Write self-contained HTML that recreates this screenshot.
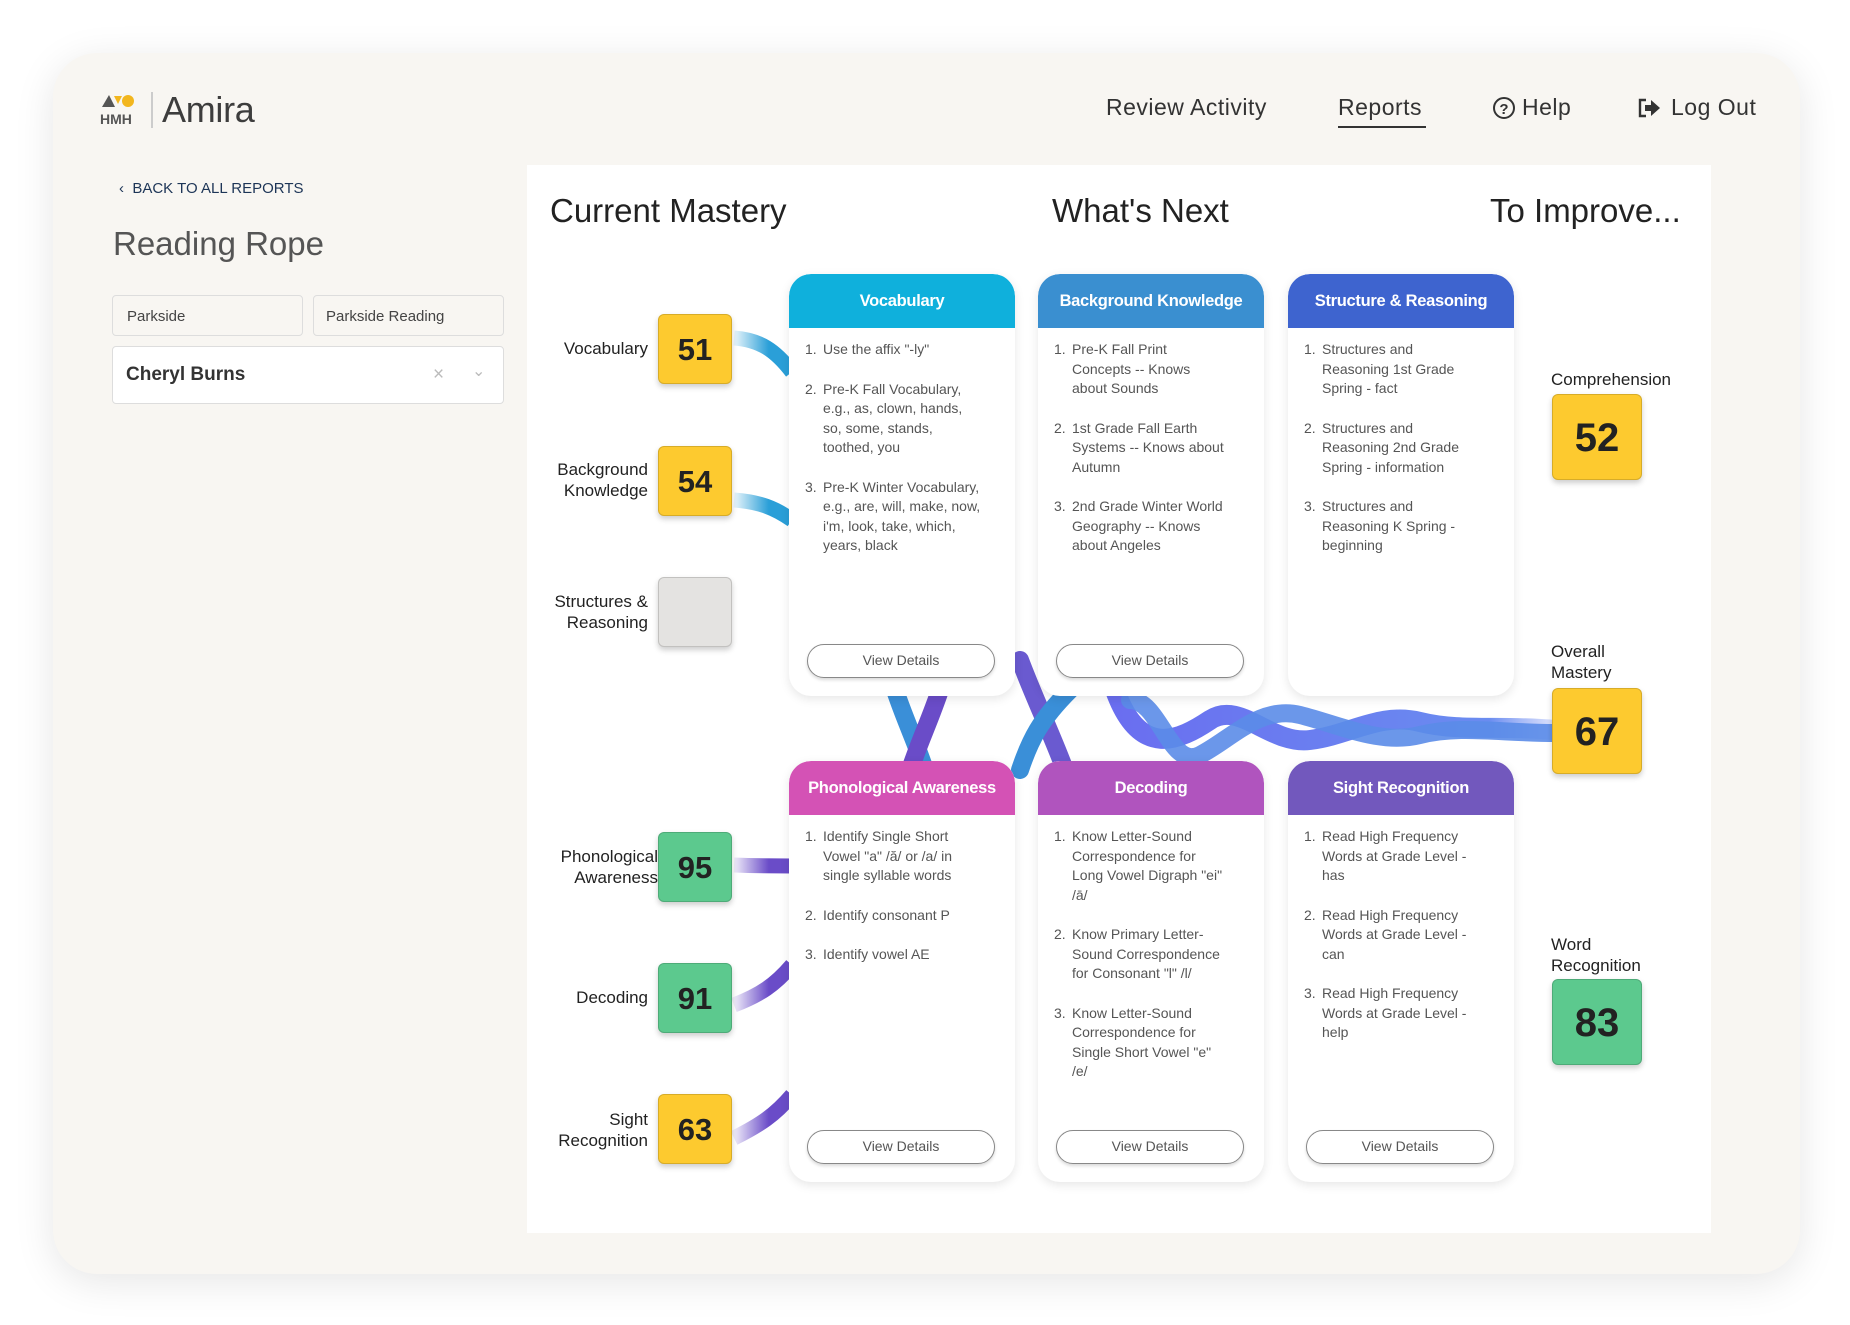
<!DOCTYPE html>
<html><head><meta charset="utf-8"><style>
*{box-sizing:border-box;margin:0;padding:0}
body{width:1850px;height:1325px;background:#fff;font-family:"Liberation Sans",sans-serif;position:relative;overflow:hidden;color:#222}
.abs{position:absolute}
.outer{left:53px;top:53px;width:1747px;height:1221px;background:#f8f6f2;border-radius:44px;box-shadow:0 8px 40px rgba(0,0,0,.10)}
.nav{font-size:23px;color:#333;top:94px;letter-spacing:.5px}
.panel{left:527px;top:165px;width:1184px;height:1068px;background:#fff}
.h{font-size:33px;color:#222;top:192px}
.card{background:#fff;border-radius:22px;box-shadow:0 3px 10px rgba(0,0,0,.10);width:226px;overflow:hidden;z-index:3}
.card .hd{height:54px;color:#fff;font-weight:bold;font-size:16.5px;text-align:center;line-height:54px;border-radius:22px 22px 0 0;letter-spacing:-.3px}
.card ol{list-style:none;padding:12px 10px 0 16px;font-size:14px;color:#555;line-height:19.5px}
.card li{position:relative;padding-left:18px;margin-bottom:20px}
.card li span{position:absolute;left:0}
.btn{position:absolute;left:18px;width:188px;height:34px;border:1.5px solid #888;border-radius:17px;text-align:center;line-height:31px;font-size:14px;color:#555;box-shadow:0 2px 3px rgba(0,0,0,.15);background:#fff}
.sc{width:74px;height:70px;border-radius:6px;font-weight:bold;font-size:31px;color:#222;text-align:center;line-height:70px;box-shadow:0 3px 6px rgba(0,0,0,.2);border:1px solid rgba(0,0,0,.15);z-index:3}
.y{background:#fdca2f}.g{background:#5cc98e}.gr{background:#e4e3e1}
.big{width:90px;height:86px;line-height:86px;font-size:40px}
.lb{font-size:17px;color:#222;text-align:right;line-height:21px;width:120px}
.rl{font-size:17px;color:#222;line-height:21px}
</style></head><body>
<div class="abs outer"></div>
<svg class="abs" style="left:100px;top:92px" width="44" height="34" viewBox="0 0 44 34">
<polygon points="2,15 9,3 15,15" fill="#555"/>
<polygon points="14,4 22,4 18,12" fill="#f2b61e"/>
<circle cx="28" cy="9" r="6" fill="#f2b61e"/>
<text x="0" y="32" font-family="Liberation Sans" font-weight="bold" font-size="14" fill="#555">HMH</text>
</svg>
<div class="abs" style="left:151px;top:92px;width:2px;height:36px;background:#ccc"></div>
<div class="abs" style="left:162px;top:89px;font-size:36px;color:#3d3d3d;letter-spacing:-.3px">Amira</div>
<div class="abs nav" style="left:1106px">Review Activity</div>
<div class="abs nav" style="left:1338px">Reports</div>
<div class="abs" style="left:1338px;top:126px;width:88px;height:2px;background:#333"></div>
<svg class="abs" style="left:1492px;top:96px" width="24" height="24"><circle cx="12" cy="12" r="10" fill="none" stroke="#333" stroke-width="2"/><text x="12" y="18" text-anchor="middle" font-size="15" font-weight="bold" fill="#333" font-family="Liberation Sans">?</text></svg>
<div class="abs nav" style="left:1522px">Help</div>
<svg class="abs" style="left:1637px;top:98px" width="24" height="20"><path d="M9 2H3v16h6" fill="none" stroke="#333" stroke-width="2.4"/><path d="M8 7h6V2l9 8-9 8v-5H8z" fill="#333"/></svg>
<div class="abs nav" style="left:1671px">Log Out</div>

<div class="abs" style="left:119px;top:180px;font-size:15px;color:#1d3557">&#8249;&nbsp; BACK TO ALL REPORTS</div>
<div class="abs" style="left:113px;top:225px;font-size:33px;color:#555;font-weight:300">Reading Rope</div>
<div class="abs" style="left:112px;top:295px;width:191px;height:41px;border:1px solid #ddd;border-radius:4px;font-size:15px;color:#444;padding:12px 14px;background:#f8f6f2">Parkside</div>
<div class="abs" style="left:313px;top:295px;width:191px;height:41px;border:1px solid #ddd;border-radius:4px;font-size:15px;color:#444;padding:12px 12px;background:#f8f6f2">Parkside Reading</div>
<div class="abs" style="left:112px;top:346px;width:392px;height:58px;border:1px solid #ddd;border-radius:4px;background:#fff;font-size:19px;font-weight:bold;color:#333;padding:17px 13px">Cheryl Burns<span style="position:absolute;left:320px;top:17px;color:#bbb;font-weight:normal">×</span><span style="position:absolute;left:359px;top:14px;color:#bbb;font-weight:normal;font-size:16px">&#8964;</span></div>

<div class="abs panel"></div>
<div class="abs h" style="left:550px">Current Mastery</div>
<div class="abs h" style="left:1052px">What's Next</div>
<div class="abs h" style="left:1490px">To Improve...</div>

<svg class="abs" style="left:0;top:0;z-index:2" width="1850" height="1325">
<defs>
<linearGradient id="gb" x1="0" x2="1"><stop offset="0" stop-color="#2a9fd8" stop-opacity=".1"/><stop offset=".6" stop-color="#2a9fd8"/></linearGradient>
<linearGradient id="gp" x1="0" x2="1"><stop offset="0" stop-color="#6a4cc8" stop-opacity=".1"/><stop offset=".6" stop-color="#6a4cc8"/></linearGradient>
<linearGradient id="gr" x1="0" x2="1"><stop offset="0" stop-color="#6a6ef0"/><stop offset=".85" stop-color="#6a8cf0"/><stop offset="1" stop-color="#8aa0f5" stop-opacity=".3"/></linearGradient>
</defs>
<g fill="none" stroke-width="15">
<path d="M734 338 C760 340 775 350 792 372" stroke="url(#gb)"/>
<path d="M734 500 C760 502 775 508 792 520" stroke="url(#gb)"/>
<path d="M734 617 C760 617 775 617 792 617" stroke="url(#gb)"/>
<path d="M734 865 C760 866 775 866 792 866" stroke="url(#gp)"/>
<path d="M734 1005 C760 995 775 985 792 965" stroke="url(#gp)"/>
<path d="M734 1138 C760 1125 775 1115 792 1095" stroke="url(#gp)"/>
</g>
<g fill="none" stroke-width="18" stroke-linecap="round">
<path d="M895 690 C905 720 915 740 925 770" stroke="#3a8fd8"/>
<path d="M940 690 C930 720 920 740 910 770" stroke="#6a4cc8"/>
<path d="M1020 660 C1035 700 1050 730 1065 770" stroke="#6a5ad0"/>
<path d="M1070 690 C1040 720 1030 740 1020 770" stroke="#3a8fd8"/>
<path d="M1115 690 C1140 760 1180 740 1210 720 C1240 700 1270 745 1310 740 C1350 735 1380 712 1420 722 C1460 732 1500 725 1555 730" stroke="url(#gr)" stroke-width="20"/>
<path d="M1130 700 C1160 700 1170 770 1200 755 C1230 740 1260 705 1300 715 C1340 725 1380 745 1420 735 C1460 725 1500 733 1555 733" stroke="#5b8ce8" stroke-width="18" opacity=".9"/>
</g>
</svg>

<div class="abs card" style="left:789px;top:274px;height:422px"><div class="hd" style="background:#0fb0dc">Vocabulary</div>
<ol><li><span>1.</span>Use the affix "-ly"</li><li><span>2.</span>Pre-K Fall Vocabulary,<br>e.g., as, clown, hands,<br>so, some, stands,<br>toothed, you</li><li><span>3.</span>Pre-K Winter Vocabulary,<br>e.g., are, will, make, now,<br>i'm, look, take, which,<br>years, black</li></ol>
<div class="btn" style="top:370px">View Details</div></div>
<div class="abs card" style="left:1038px;top:274px;height:422px"><div class="hd" style="background:#3a8fd0">Background Knowledge</div>
<ol><li><span>1.</span>Pre-K Fall Print<br>Concepts -- Knows<br>about Sounds</li><li><span>2.</span>1st Grade Fall Earth<br>Systems -- Knows about<br>Autumn</li><li><span>3.</span>2nd Grade Winter World<br>Geography -- Knows<br>about Angeles</li></ol>
<div class="btn" style="top:370px">View Details</div></div>
<div class="abs card" style="left:1288px;top:274px;height:422px"><div class="hd" style="background:#3e64cf">Structure &amp; Reasoning</div>
<ol><li><span>1.</span>Structures and<br>Reasoning 1st Grade<br>Spring - fact</li><li><span>2.</span>Structures and<br>Reasoning 2nd Grade<br>Spring - information</li><li><span>3.</span>Structures and<br>Reasoning K Spring -<br>beginning</li></ol></div>
<div class="abs card" style="left:789px;top:761px;height:421px"><div class="hd" style="background:#d452b5">Phonological Awareness</div>
<ol><li><span>1.</span>Identify Single Short<br>Vowel "a" /ă/ or /a/ in<br>single syllable words</li><li><span>2.</span>Identify consonant P</li><li><span>3.</span>Identify vowel AE</li></ol>
<div class="btn" style="top:369px">View Details</div></div>
<div class="abs card" style="left:1038px;top:761px;height:421px"><div class="hd" style="background:#b054be">Decoding</div>
<ol><li><span>1.</span>Know Letter-Sound<br>Correspondence for<br>Long Vowel Digraph "ei"<br>/ā/</li><li><span>2.</span>Know Primary Letter-<br>Sound Correspondence<br>for Consonant "l" /l/</li><li><span>3.</span>Know Letter-Sound<br>Correspondence for<br>Single Short Vowel "e"<br>/e/</li></ol>
<div class="btn" style="top:369px">View Details</div></div>
<div class="abs card" style="left:1288px;top:761px;height:421px"><div class="hd" style="background:#7258bd">Sight Recognition</div>
<ol><li><span>1.</span>Read High Frequency<br>Words at Grade Level -<br>has</li><li><span>2.</span>Read High Frequency<br>Words at Grade Level -<br>can</li><li><span>3.</span>Read High Frequency<br>Words at Grade Level -<br>help</li></ol>
<div class="btn" style="top:369px">View Details</div></div>

<div class="abs lb" style="left:528px;top:338px">Vocabulary</div>
<div class="abs sc y" style="left:658px;top:314px">51</div>
<div class="abs lb" style="left:528px;top:459px">Background<br>Knowledge</div>
<div class="abs sc y" style="left:658px;top:446px">54</div>
<div class="abs lb" style="left:528px;top:591px">Structures &amp;<br>Reasoning</div>
<div class="abs sc gr" style="left:658px;top:577px"></div>
<div class="abs lb" style="left:538px;top:846px">Phonological<br>Awareness</div>
<div class="abs sc g" style="left:658px;top:832px">95</div>
<div class="abs lb" style="left:528px;top:987px">Decoding</div>
<div class="abs sc g" style="left:658px;top:963px">91</div>
<div class="abs lb" style="left:528px;top:1109px">Sight<br>Recognition</div>
<div class="abs sc y" style="left:658px;top:1094px">63</div>
<div class="abs rl" style="left:1551px;top:369px">Comprehension</div>
<div class="abs sc y big" style="left:1552px;top:394px">52</div>
<div class="abs rl" style="left:1551px;top:641px">Overall<br>Mastery</div>
<div class="abs sc y big" style="left:1552px;top:688px">67</div>
<div class="abs rl" style="left:1551px;top:934px">Word<br>Recognition</div>
<div class="abs sc g big" style="left:1552px;top:979px">83</div>
</body></html>
